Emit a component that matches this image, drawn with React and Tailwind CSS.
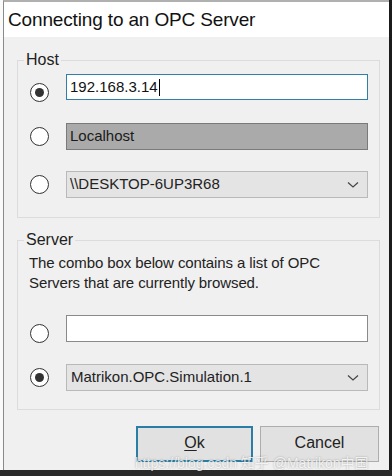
import React from "react";

const font = { fontFamily: '"Liberation Sans", Arial, sans-serif' };

function Radio({ checked, className = "" }) {
  return (
    <div
      className={`w-[19px] h-[19px] rounded-full border border-[#333333] bg-white flex items-center justify-center shrink-0 ${className}`}
    >
      {checked && <div className="w-[9px] h-[9px] rounded-full bg-[#333333]" />}
    </div>
  );
}

function Chevron() {
  return (
    <svg width="12" height="8" viewBox="0 0 12 8" className="shrink-0">
      <path d="M1 1.5 L6 6 L11 1.5" fill="none" stroke="#444" strokeWidth="1.2" />
    </svg>
  );
}

export default function App() {
  return (
    <div
      className="w-[392px] h-[476px] flex flex-col bg-[#fbfbfb] overflow-hidden text-[#111]"
      style={font}
    >
      <div className="flex h-[470px]">
        <div className="w-[3px] bg-[#fafafa]" />
        <div className="flex-1 flex flex-col border-l border-t-2 border-l-[#8a8a8a] border-t-[#b0b0b0] relative">
          {/* title bar */}
          <div className="h-[35px] bg-white flex items-center pl-[4px] pt-[1px]">
            <span className="text-[19px] tracking-[-0.15px] text-[#111]">Connecting to an OPC Server</span>
          </div>
          {/* body */}
          <div className="flex-1 bg-[#f0f0f0] pl-[13px] pr-[9px] pt-[14px]">
            {/* Host */}
            <fieldset className="border border-[#dcdcdc] h-[167px] px-0 pt-0">
              <legend className="ml-[6px] px-[2px] text-[16px] leading-[18px] text-[#222]">Host</legend>
              <div className="flex flex-col pl-[12px] pr-[11px] pt-[5px] gap-[21px]">
                <div className="flex items-start gap-[17px]">
                  <Radio checked className="mt-[9px]" />
                  <div className="flex-1 h-[26px] bg-white border border-[#2f7fa6] flex items-center px-[3px] text-[15px]">
                    192.168.3.14<span className="w-[1px] h-[17px] bg-black ml-[1px]" />
                  </div>
                </div>
                <div className="flex items-center gap-[17px]">
                  <Radio />
                  <div className="flex-1 h-[27px] bg-[#aaaaaa] border border-[#7a7a7a] flex items-center px-[3px] text-[15px] text-[#1a1a1a]">
                    Localhost
                  </div>
                </div>
                <div className="flex items-center gap-[17px]">
                  <Radio />
                  <div className="flex-1 h-[27px] bg-[#e4e4e4] border border-[#b9b9b9] flex items-center justify-between pl-[3px] pr-[8px] text-[15px] text-[#222]">
                    <span>\\DESKTOP-6UP3R68</span>
                    <Chevron />
                  </div>
                </div>
              </div>
            </fieldset>
            {/* Server */}
            <fieldset className="border border-[#dcdcdc] h-[179px] mt-[13px] px-0 pt-0">
              <legend className="ml-[6px] px-[2px] text-[16px] leading-[18px] text-[#222]">Server</legend>
              <div className="pl-[11px] pr-[10px] pt-[4px] text-[15px] leading-[20px] text-[#222] tracking-[-0.1px]">
                The combo box below contains a list of OPC Servers that are currently browsed.
              </div>
              <div className="flex flex-col pl-[12px] pr-[11px] pt-[22px] gap-[21px]">
                <div className="flex items-start gap-[17px]">
                  <Radio className="mt-[9px]" />
                  <div className="flex-1 h-[27px] bg-white border border-[#8a8a8a]" />
                </div>
                <div className="flex items-center gap-[17px]">
                  <Radio checked />
                  <div className="flex-1 h-[27px] bg-[#e4e4e4] border border-[#b9b9b9] flex items-center justify-between pl-[4px] pr-[8px] text-[15px] text-[#222]">
                    <span>Matrikon.OPC.Simulation.1</span>
                    <Chevron />
                  </div>
                </div>
              </div>
            </fieldset>
            {/* buttons */}
            <div className="flex justify-end gap-[7px] pr-[1px] mt-[16px]">
              <div className="w-[117px] h-[36px] bg-[#e1e1e1] border-2 border-[#2a7ea5] flex items-start pt-[6px] justify-center text-[16px] leading-[18px] text-[#222]">
                <span><span className="underline underline-offset-2">O</span>k</span>
              </div>
              <div className="w-[119px] h-[36px] bg-[#e1e1e1] border border-[#adadad] flex items-start pt-[7px] justify-center text-[16px] leading-[18px] text-[#222]">
                Cancel
              </div>
            </div>
          </div>
          {/* watermark */}
          <div
            className="absolute left-[131px] top-[454px] text-[14px] leading-[14px] text-white/80 whitespace-nowrap"
            style={{ textShadow: "0 0 2px rgba(0,0,0,0.35)", fontFamily: '"Liberation Sans", "Noto Sans CJK SC", sans-serif' }}
          >
            https://blog.csdn 知乎 @Matrikon中国
          </div>
        </div>
        <div className="w-[3px] bg-[#1b1b1b]" />
      </div>
      <div className="flex-1 bg-[#2a2a2a]" />
    </div>
  );
}
